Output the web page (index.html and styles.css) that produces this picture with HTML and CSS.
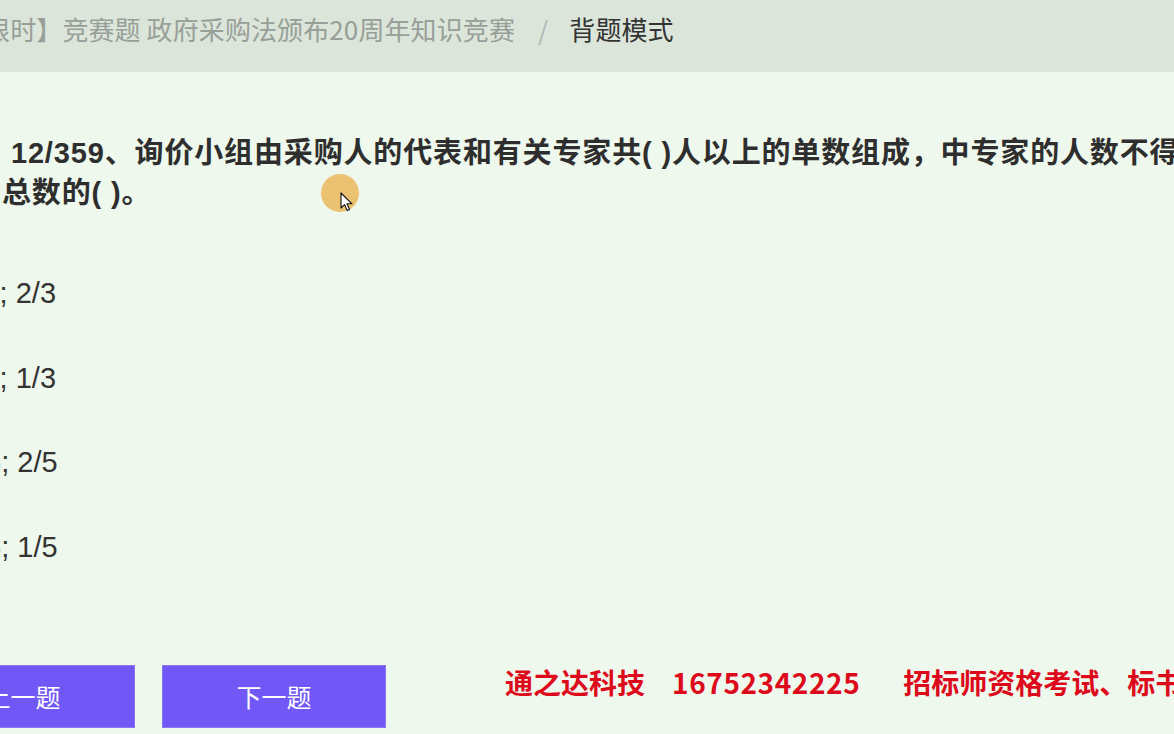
FILE: index.html
```html
<!DOCTYPE html>
<html lang="zh-CN">
<head>
<meta charset="utf-8">
<title>背题模式</title>
<link rel="stylesheet" href="styles.css">
</head>
<body>
<div class="page">
  <header class="crumbs">
    <span class="crumb-link">【限时】竞赛题 政府采购法颁布20周年知识竞赛</span>
    <span class="crumb-sep">/</span>
    <span class="crumb-current">背题模式</span>
  </header>
  <main class="content">
    <p class="question">&nbsp;12/359、询价小组由采购人的代表和有关专家共( )人以上的单数组成，中专家的人数不得少于成员<br>总数的( )。</p>
    <ul class="options">
      <li class="option">A. 3; 2/3</li>
      <li class="option">B. 3; 1/3</li>
      <li class="option">C. 5; 2/5</li>
      <li class="option">D. 5; 1/5</li>
    </ul>
    <div class="actions">
      <button class="btn">上一题</button>
      <button class="btn">下一题</button>
      <div class="promo">
        <span>通之达科技</span><span class="promo-phone">16752342225</span><span class="promo-desc">招标师资格考试、标书制作培训</span>
      </div>
    </div>
  </main>
</div>
<div class="cursor-spot">
  <svg class="cursor-arrow" width="14" height="20" viewBox="0 0 14 20"><path d="M1 1 L1 16 L4.6 12.6 L7.2 18.6 L9.6 17.6 L7 11.8 L12 11.8 Z" fill="#fff" stroke="#111" stroke-width="1.1" stroke-linejoin="round"/></svg>
</div>
</body>
</html>
```
FILE: styles.css
```css
html, body {
  margin: 0;
  padding: 0;
}
body {
  width: 1174px;
  height: 734px;
  overflow: hidden;
  background: #eef8ec;
  font-family: "Liberation Sans", "Noto Sans CJK SC", sans-serif;
  color: #333;
  position: relative;
}
.page {
  margin-left: -100px;
  width: 1400px;
}
.crumbs {
  height: 72px;
  background: #dbe5da;
  display: flex;
  align-items: center;
  padding-left: 58px;
  padding-bottom: 16px;
  box-sizing: border-box;
  font-family: "Noto Sans CJK SC", "Liberation Sans", sans-serif;
  font-size: 26px;
  letter-spacing: 0.1px;
  white-space: nowrap;
}
.crumb-link {
  color: #989f98;
}
.crumb-sep {
  color: #b2b9b2;
  margin: 0 21px 0 23px;
}
.crumb-current {
  color: #333;
}
.content {
  display: flex;
  flex-direction: column;
}
.question {
  margin: 61px 0 0 0;
  padding-left: 102px;
  font-size: 29px;
  font-weight: bold;
  line-height: 40px;
  letter-spacing: 0.85px;
  white-space: nowrap;
  color: #2e2e2e;
}
.options {
  list-style: none;
  margin: 60px 0 0 0;
  padding: 0 0 0 48px;
  display: flex;
  flex-direction: column;
  gap: 44.5px;
}
.option {
  font-size: 29px;
  line-height: 40px;
  color: #333;
}
.actions {
  margin-top: 98px;
  padding-left: 11px;
  display: flex;
  align-items: flex-start;
  gap: 27px;
}
.btn {
  width: 224px;
  height: 63px;
  background: #7158f6;
  border: 1px solid #8a77f0;
  color: #fff;
  font-family: "Noto Sans CJK SC", "Liberation Sans", sans-serif;
  font-size: 25px;
  padding: 0;
}
.promo {
  margin-left: 92px;
  margin-top: -3px;
  line-height: 40px;
  font-family: "Noto Sans CJK SC", sans-serif;
  font-weight: bold;
  font-size: 28px;
  color: #dd0a1c;
  white-space: nowrap;
}
.promo-phone {
  margin-left: 27px;
  letter-spacing: 0.6px;
}
.promo-desc {
  margin-left: 43px;
}
.cursor-spot {
  position: absolute;
  left: 321px;
  top: 174px;
  width: 38px;
  height: 38px;
  border-radius: 50%;
  background: #ebc271;
}
.cursor-arrow {
  position: absolute;
  left: 19px;
  top: 18px;
}
```
